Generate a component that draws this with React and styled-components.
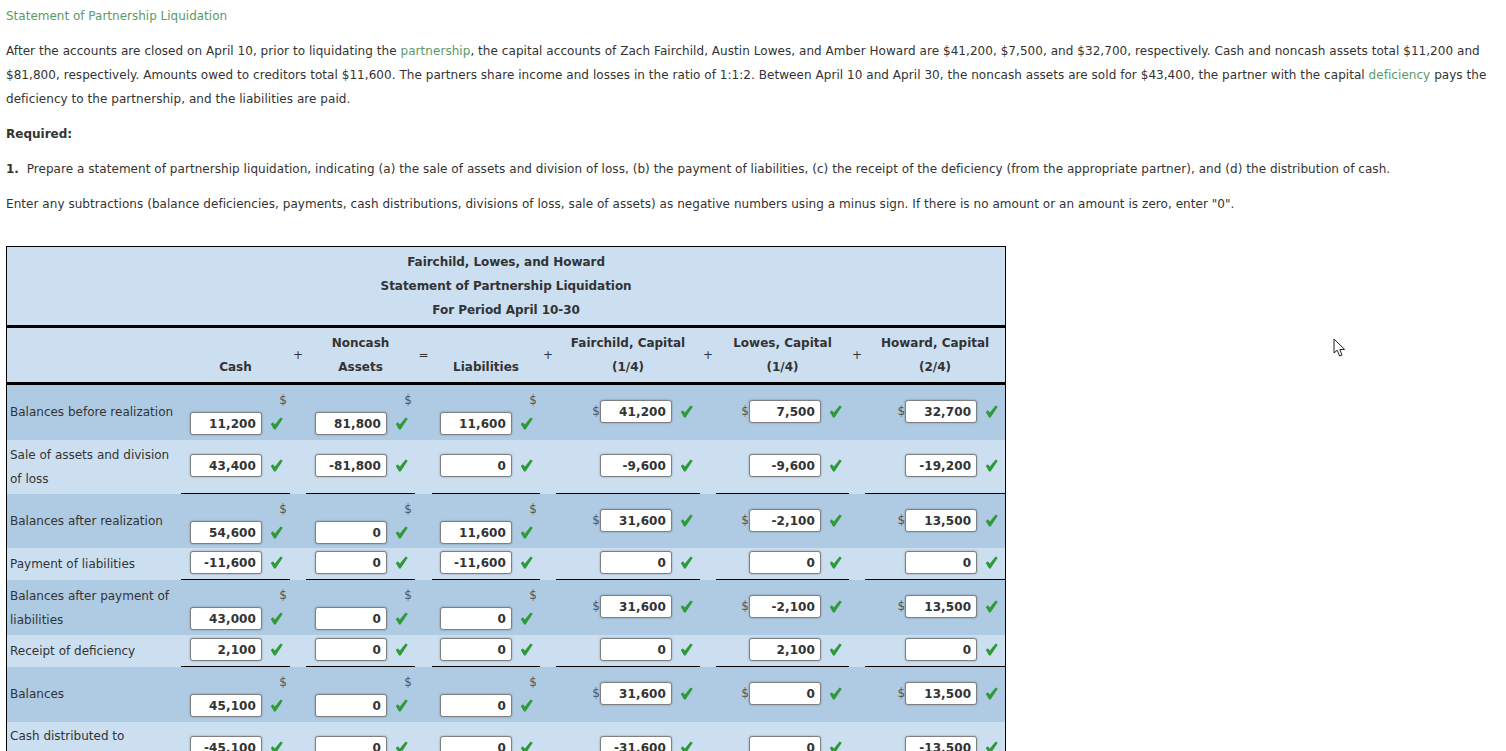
import React from "react";
import styled, { createGlobalStyle } from "styled-components";

const GlobalStyle = createGlobalStyle`
  html, body {
    margin: 0;
    height: 100%;
    overflow: hidden;
    background: #fff;
  }
  body {
    font-family: "DejaVu Sans", Verdana, sans-serif;
    font-size: 12px;
    line-height: 24px;
    color: #333;
  }
`;

const Page = styled.div`
  padding: 4px 8px 0 6px;
  width: 1506px;
  box-sizing: border-box;
`;

const Heading = styled.div`
  color: #5b9a68;
  margin-bottom: 11px;
`;

const Para = styled.p`
  margin: 0 0 11px;
  letter-spacing: 0.05px;
`;

const Link = styled.span`
  color: #5b9a68;
`;

const Strong = styled.b`
  letter-spacing: 0;
`;

const Sheet = styled.table`
  margin-top: 30px;
  width: 1000px;
  table-layout: fixed;
  border-collapse: separate;
  border-spacing: 0;
  border: 1px solid #000;
  border-bottom: 0;
`;

const TitleCell = styled.td`
  background: #cbdff1;
  text-align: center;
  font-weight: bold;
  letter-spacing: -0.05px;
  padding: 3px 0;
  border-bottom: 3px solid #000;
`;

const HeadCell = styled.th`
  background: #cbdff1;
  text-align: center;
  vertical-align: bottom;
  font-weight: bold;
  padding: 3px 0;
  border-bottom: 3px solid #000;
`;

const Sign = styled.th`
  background: #cbdff1;
  text-align: center;
  vertical-align: middle;
  font-weight: normal;
  padding: 0 0 1px;
  border-bottom: 3px solid #000;
`;

const Row = styled.tr`
  height: ${(p) => p.$h}px;
  background: ${(p) => (p.$dark ? "#aecbe3" : "#cbdff1")};
`;

const Label = styled.td`
  padding: 0 4px ${(p) => p.$lift}px 3px;
  vertical-align: middle;
`;

const Amount = styled.td`
  padding: 0 0 ${(p) => p.$lift}px;
  vertical-align: middle;
  border-bottom: ${(p) => (p.$rule ? "1px solid #000" : "0")};
`;

const Gap = styled.td`
  padding: 0;
`;

const Stack = styled.div`
  display: flex;
  flex-direction: column;
  align-items: flex-end;
`;

const TopDollar = styled.span`
  line-height: 24px;
  padding-right: 3px;
  color: #555;
`;

const Field = styled.div`
  display: flex;
  align-items: center;
  justify-content: flex-end;
  width: 100%;
`;

const InlineDollar = styled.span`
  color: #555;
  line-height: 23px;
`;

const Input = styled.input`
  box-sizing: border-box;
  width: 72px;
  height: 23px;
  margin: 0;
  padding: 0 5px 0 0;
  background: #fff;
  border: 1px solid #808080;
  border-radius: 3px;
  box-shadow: 0 0 2px rgba(0, 0, 0, 0.35);
  outline: none;
  font-family: inherit;
  font-size: 12px;
  font-weight: bold;
  letter-spacing: 0.1px;
  color: #333;
  text-align: right;
`;

const TickSlot = styled.span`
  display: flex;
  justify-content: flex-start;
  width: 28px;
  padding-left: 8px;
  box-sizing: border-box;
`;

const Pointer = styled.svg`
  position: absolute;
  left: 1333px;
  top: 338px;
`;

const Tick = () => (
  <TickSlot>
    <svg width="13" height="13" viewBox="0 0 13 13">
      <path d="M0.8 7 L2.8 5.2 L4.9 7.6 L10.6 0.4 L12.8 1.8 L5.6 12.6 L4 12.6 Z" fill="#2f9a38" />
    </svg>
  </TickSlot>
);

// stacked = $ sits above the box (asset and liability columns), otherwise beside it
const Money = ({ value, dollar, stacked, rule, lift }) => (
  <Amount $rule={rule} $lift={lift}>
    {stacked ? (
      <Stack>
        {dollar && <TopDollar>$</TopDollar>}
        <Field>
          <Input readOnly value={value} />
          <Tick />
        </Field>
      </Stack>
    ) : (
      <Field>
        {dollar && <InlineDollar>$</InlineDollar>}
        <Input readOnly value={value} />
        <Tick />
      </Field>
    )}
  </Amount>
);

const rows = [
  { label: "Balances before realization", h: 55, labelLift: 2, dark: true, dollar: true, values: ["11,200", "81,800", "11,600", "41,200", "7,500", "32,700"] },
  { label: "Sale of assets and division of loss", h: 54, rule: true, values: ["43,400", "-81,800", "0", "-9,600", "-9,600", "-19,200"] },
  { label: "Balances after realization", h: 54, lift: 1, dark: true, dollar: true, values: ["54,600", "0", "11,600", "31,600", "-2,100", "13,500"] },
  { label: "Payment of liabilities", h: 32, rule: true, values: ["-11,600", "0", "-11,600", "0", "0", "0"] },
  { label: "Balances after payment of liabilities", h: 55, dark: true, dollar: true, values: ["43,000", "0", "0", "31,600", "-2,100", "13,500"] },
  { label: "Receipt of deficiency", h: 32, rule: true, values: ["2,100", "0", "0", "0", "2,100", "0"] },
  { label: "Balances", h: 55, labelLift: 2, dark: true, dollar: true, values: ["45,100", "0", "0", "31,600", "0", "13,500"] },
  { label: "Cash distributed to partners", h: 54, labelLift: 2, rule: true, values: ["-45,100", "0", "0", "-31,600", "0", "-13,500"] },
];

const widths = [174, 109, 16, 109, 17, 108, 16, 144, 16, 133, 16, 140];

const App = () => (
  <Page>
    <GlobalStyle />
    <Heading>Statement of Partnership Liquidation</Heading>
    <Para>
      After the accounts are closed on April 10, prior to liquidating the <Link>partnership</Link>, the capital accounts of Zach Fairchild, Austin Lowes, and Amber Howard are $41,200, $7,500, and $32,700, respectively. Cash and noncash assets total $11,200 and $81,800, respectively. Amounts owed to creditors total $11,600. The partners share income and losses in the ratio of 1:1:2. Between April 10 and April 30, the noncash assets are sold for $43,400, the partner with the capital <Link>deficiency</Link> pays the deficiency to the partnership, and the liabilities are paid.
    </Para>
    <Para>
      <Strong>Required:</Strong>
    </Para>
    <Para>
      <Strong>1.</Strong>&nbsp; Prepare a statement of partnership liquidation, indicating (a) the sale of assets and division of loss, (b) the payment of liabilities, (c) the receipt of the deficiency (from the appropriate partner), and (d) the distribution of cash.
    </Para>
    <Para>
      Enter any subtractions (balance deficiencies, payments, cash distributions, divisions of loss, sale of assets) as negative numbers using a minus sign. If there is no amount or an amount is zero, enter "0".
    </Para>
    <Sheet>
      <colgroup>
        {widths.map((w, i) => (
          <col key={i} width={w} />
        ))}
      </colgroup>
      <thead>
        <tr>
          <TitleCell colSpan={12}>
            Fairchild, Lowes, and Howard
            <br />
            Statement of Partnership Liquidation
            <br />
            For Period April 10-30
          </TitleCell>
        </tr>
        <tr>
          <HeadCell />
          <HeadCell>Cash</HeadCell>
          <Sign>+</Sign>
          <HeadCell>
            Noncash
            <br />
            Assets
          </HeadCell>
          <Sign>=</Sign>
          <HeadCell>Liabilities</HeadCell>
          <Sign>+</Sign>
          <HeadCell>
            Fairchild, Capital
            <br />
            (1/4)
          </HeadCell>
          <Sign>+</Sign>
          <HeadCell>
            Lowes, Capital
            <br />
            (1/4)
          </HeadCell>
          <Sign>+</Sign>
          <HeadCell>
            Howard, Capital
            <br />
            (2/4)
          </HeadCell>
        </tr>
      </thead>
      <tbody>
        {rows.map((r) => (
          <Row key={r.label} $h={r.h} $dark={r.dark}>
            <Label $lift={r.labelLift ?? 0}>{r.label}</Label>
            {r.values.map((v, i) => (
              <React.Fragment key={i}>
                <Money value={v} dollar={r.dollar} stacked={i < 3} rule={r.rule} lift={r.lift ?? 2} />
                {i < 5 && <Gap />}
              </React.Fragment>
            ))}
          </Row>
        ))}
      </tbody>
    </Sheet>
    <Pointer width="14" height="22" viewBox="0 0 14 22">
      <path d="M1 1 L1 15 L4.2 12.2 L6.6 18 L9 17 L6.8 11.6 L11.6 11.4 Z" fill="#fff" stroke="#222" strokeWidth="1" />
    </Pointer>
  </Page>
);

export default App;
